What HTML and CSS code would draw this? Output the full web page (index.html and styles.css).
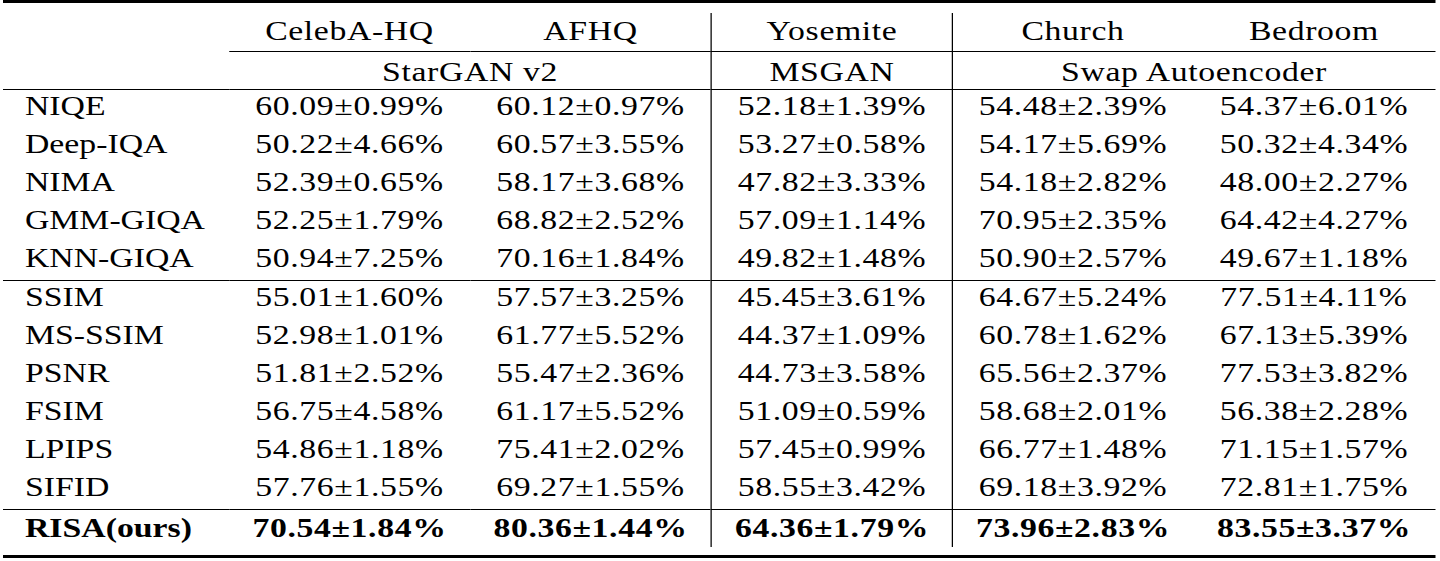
FILE: index.html
```html
<!DOCTYPE html>
<html lang="en">
<head>
    <meta charset="UTF-8">
    <meta name="viewport" content="width=device-width, initial-scale=1.0">
    <title>GIQA comparison</title>
    <link rel="stylesheet" href="styles.css">
</head>
<body>
    <table class="results">
        <colgroup>
            <col class="c-label">
            <col class="c-a">
            <col class="c-b">
            <col class="c-c">
            <col class="c-d">
            <col class="c-e">
        </colgroup>
        <thead>
            <tr class="head-data">
                <th></th>
                <th class="ruled">CelebA-HQ</th>
                <th class="ruled">AFHQ</th>
                <th class="ruled sep sep-top">Yosemite</th>
                <th class="ruled">Church</th>
                <th class="ruled">Bedroom</th>
            </tr>
            <tr class="head-model">
                <th></th>
                <th colspan="2">StarGAN v2</th>
                <th class="sep">MSGAN</th>
                <th colspan="2">Swap Autoencoder</th>
            </tr>
        </thead>
        <tbody>
            <tr>
                <td class="name">NIQE</td>
                <td>60.09±0.99%</td><td>60.12±0.97%</td><td class="sep">52.18±1.39%</td><td>54.48±2.39%</td><td>54.37±6.01%</td>
            </tr>
            <tr>
                <td class="name">Deep-IQA</td>
                <td>50.22±4.66%</td><td>60.57±3.55%</td><td class="sep">53.27±0.58%</td><td>54.17±5.69%</td><td>50.32±4.34%</td>
            </tr>
            <tr>
                <td class="name">NIMA</td>
                <td>52.39±0.65%</td><td>58.17±3.68%</td><td class="sep">47.82±3.33%</td><td>54.18±2.82%</td><td>48.00±2.27%</td>
            </tr>
            <tr>
                <td class="name">GMM-GIQA</td>
                <td>52.25±1.79%</td><td>68.82±2.52%</td><td class="sep">57.09±1.14%</td><td>70.95±2.35%</td><td>64.42±4.27%</td>
            </tr>
            <tr class="group-end">
                <td class="name">KNN-GIQA</td>
                <td>50.94±7.25%</td><td>70.16±1.84%</td><td class="sep">49.82±1.48%</td><td>50.90±2.57%</td><td>49.67±1.18%</td>
            </tr>
            <tr>
                <td class="name">SSIM</td>
                <td>55.01±1.60%</td><td>57.57±3.25%</td><td class="sep">45.45±3.61%</td><td>64.67±5.24%</td><td>77.51±4.11%</td>
            </tr>
            <tr>
                <td class="name">MS-SSIM</td>
                <td>52.98±1.01%</td><td>61.77±5.52%</td><td class="sep">44.37±1.09%</td><td>60.78±1.62%</td><td>67.13±5.39%</td>
            </tr>
            <tr>
                <td class="name">PSNR</td>
                <td>51.81±2.52%</td><td>55.47±2.36%</td><td class="sep">44.73±3.58%</td><td>65.56±2.37%</td><td>77.53±3.82%</td>
            </tr>
            <tr>
                <td class="name">FSIM</td>
                <td>56.75±4.58%</td><td>61.17±5.52%</td><td class="sep">51.09±0.59%</td><td>58.68±2.01%</td><td>56.38±2.28%</td>
            </tr>
            <tr>
                <td class="name">LPIPS</td>
                <td>54.86±1.18%</td><td>75.41±2.02%</td><td class="sep">57.45±0.99%</td><td>66.77±1.48%</td><td>71.15±1.57%</td>
            </tr>
            <tr class="group-end">
                <td class="name">SIFID</td>
                <td>57.76±1.55%</td><td>69.27±1.55%</td><td class="sep">58.55±3.42%</td><td>69.18±3.92%</td><td>72.81±1.75%</td>
            </tr>
            <tr class="ours">
                <td class="name">RISA(ours)</td>
                <td>70.54±1.84%</td><td>80.36±1.44%</td><td class="sep sep-bottom">64.36±1.79%</td><td>73.96±2.83%</td><td>83.55±3.37%</td>
            </tr>
        </tbody>
    </table>
</body>
</html>
```

FILE: styles.css
```css
* {
    margin: 0;
    padding: 0;
    box-sizing: border-box;
}

body {
    background: #fff;
    color: #000;
    font-family: "Liberation Serif", "Times New Roman", serif;
    font-size: 27px;
    overflow: hidden;
}

/* the source figure is stretched wider than it is tall, so the table is too */
.results {
    width: 1145.6px;
    margin-left: 3px;
    border-collapse: separate;
    border-spacing: 0;
    border-top: 3px solid #000;
    border-bottom: 3px solid #000;
    table-layout: fixed;
    letter-spacing: 0.5px;
    transform: scaleX(1.25);
    transform-origin: left top;
}

.c-label { width: 180.8px; }
.c-a { width: 192.8px; }
.c-b { width: 192.8px; }
.c-c { width: 193.6px; }
.c-d { width: 192px; }
.c-e { width: 193.6px; }

.results th,
.results td {
    font-weight: normal;
    text-align: center;
    line-height: 32px;
    white-space: nowrap;
    padding: 0 0 6px;
}

.results td.name {
    text-align: left;
    padding-left: 17.6px;
    letter-spacing: 0;
}

/* header rows */
.head-data th {
    padding: 12px 0 4px;
}

.head-data th.ruled {
    border-bottom: 1px solid #000;
}

.head-model th {
    padding: 4px 0 1px;
    border-bottom: 1px solid #000;
}

.group-end td {
    border-bottom: 1px solid #000;
}

.ours td {
    font-weight: bold;
    padding: 2px 0 11px;
}

/* vertical rules around the MSGAN column */
.results .sep {
    background:
        linear-gradient(#000, #000) left top / 1px 100% no-repeat,
        linear-gradient(#000, #000) right top / 1px 100% no-repeat;
}

.results .sep-top {
    background:
        linear-gradient(#000, #000) left 10px / 1px 100% no-repeat,
        linear-gradient(#000, #000) right 10px / 1px 100% no-repeat;
}

.results .sep-bottom {
    background:
        linear-gradient(#000, #000) left top / 1px calc(100% - 8px) no-repeat,
        linear-gradient(#000, #000) right top / 1px calc(100% - 8px) no-repeat;
}
```
